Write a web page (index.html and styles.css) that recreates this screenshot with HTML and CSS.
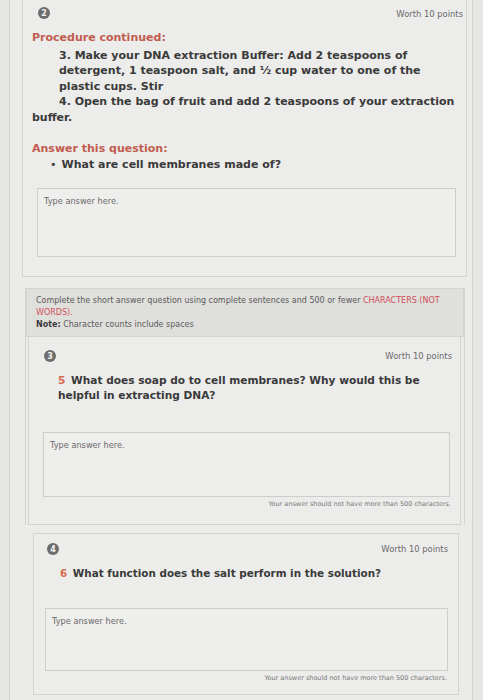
FILE: index.html
```html
<!DOCTYPE html>
<html>
<head>
<meta charset="utf-8">
<link rel="stylesheet" href="styles.css">
</head>
<body>
<div class="sheet">
  <div class="card q2">
    <div class="head">
      <span class="badge">2</span>
      <span class="worth">Worth 10 points</span>
    </div>
    <div class="content">
      <p class="red heading">Procedure continued:</p>
      <p class="step">3. Make your DNA extraction Buffer: Add 2 teaspoons of<br>detergent, 1 teaspoon salt, and ½ cup water to one of the<br>plastic cups. Stir</p>
      <p class="step4">4. Open the bag of fruit and add 2 teaspoons of your extraction<br>buffer.</p>
      <p class="red heading2">Answer this question:</p>
      <p class="bullet"><span class="dot">•</span>What are cell membranes made of?</p>
    </div>
    <div class="answer a2">Type answer here.</div>
  </div>

  <div class="group">
    <div class="note">
      <p>Complete the short answer question using complete sentences and 500 or fewer <span class="pink">CHARACTERS (NOT</span><br><span class="pink">WORDS).</span></p>
      <p><b>Note:</b> Character counts include spaces</p>
    </div>
    <div class="card q3">
      <div class="head">
        <span class="badge">3</span>
        <span class="worth">Worth 10 points</span>
      </div>
      <p class="question"><span class="num">5</span> What does soap do to cell membranes? Why would this be<br>helpful in extracting DNA?</p>
      <div class="answer a3">Type answer here.</div>
      <p class="limit">Your answer should not have more than 500 characters.</p>
    </div>
  </div>

  <div class="card q4">
    <div class="head">
      <span class="badge">4</span>
      <span class="worth">Worth 10 points</span>
    </div>
    <p class="question"><span class="num">6</span> What function does the salt perform in the solution?</p>
    <div class="answer a4">Type answer here.</div>
    <p class="limit">Your answer should not have more than 500 characters.</p>
  </div>
</div>
</body>
</html>
```

FILE: styles.css
```css
html, body {
  margin: 0;
  padding: 0;
  background: #e6e6e4;
  height: 700px;
  overflow: hidden;
  font-family: "DejaVu Sans", Verdana, sans-serif;
  color: #3a3a3a;
}
p { margin: 0; }

.sheet {
  margin: 0 10px 0 9px;
  padding: 0 5px 0 12px;
  border-left: 1px solid #d4d4d2;
  border-right: 1px solid #d4d4d2;
  background: #ebebe9;
  height: 700px;
  box-sizing: border-box;
  display: flex;
  flex-direction: column;
}

.card {
  border: 1px solid #d3d3d1;
  background: #ececea;
}

.head {
  display: flex;
  justify-content: space-between;
  align-items: center;
}
.badge {
  width: 12px;
  height: 12px;
  border-radius: 50%;
  background: #6c6c6c;
  color: #f2f2f2;
  font-size: 8px;
  font-weight: bold;
  display: flex;
  align-items: center;
  justify-content: center;
}
.worth {
  font-size: 8.4px;
  color: #6a6a6a;
}

/* question 2 */
.q2 {
  border-top: none;
  padding: 7px 8px 19px 5px;
}
.q2 .head { padding: 0 0 0 10px; margin-right: -5px; }
.q2 .worth { margin-top: 2px; }
.content {
  font-size: 11px;
  font-weight: bold;
  line-height: 15.5px;
  padding-left: 4px;
}
.red { color: #c15c4f; }
.heading { margin-top: 11px; }
.step { padding-left: 27px; margin-top: 2px; }
.step4 { text-indent: 27px; }
.heading2 { margin-top: 16px; }
.bullet { padding-left: 18px; margin-top: 0; }
.dot { font-weight: normal; margin-right: 5px; }

.answer {
  border: 1px solid #cdcdcb;
  background: #eeeeec;
  font-size: 8.2px;
  color: #6a6a6a;
  padding: 7px 6px;
  box-sizing: border-box;
}
.a2 { margin: 16px 2px 0 9px; height: 69px; }

/* group with note */
.group {
  margin-top: 11px;
  margin-left: 3px;
  margin-right: 2px;
  border-left: 1px solid #d3d3d1;
  border-right: 1px solid #d3d3d1;
}
.note {
  background: #dfdfdc;
  border: 1px solid #d3d3d1;
  padding: 6px 10px 5px 9px;
  font-size: 8px;
  line-height: 12px;
  color: #5a5a5a;
}
.note b { color: #3a3a3a; }
.pink { color: #d2505a; }

.q3 {
  margin: 0 3px 0 2px;
  border-top: none;
  padding: 13px 8px 16px 15px;
}
.question {
  font-size: 10.6px;
  font-weight: bold;
  line-height: 15px;
  color: #3a3a3a;
  padding-left: 14px;
  margin-top: 11px;
}
.num { color: #d46a4e; margin-right: 2px; }
.a3 { margin: 29px 2px 0 -1px; height: 65px; }
.limit {
  text-align: right;
  font-size: 6.5px;
  color: #7a7a7a;
  margin-top: 3px;
  padding-right: 1px;
}

.q4 {
  margin: 8px 8px 0 11px;
  padding: 9px 10px 12px 13px;
}
.q4 .question { margin-top: 11px; padding-left: 13px; font-size: 10.4px; }
.a4 { margin: 27px 0 0 -2px; height: 63px; }
```
